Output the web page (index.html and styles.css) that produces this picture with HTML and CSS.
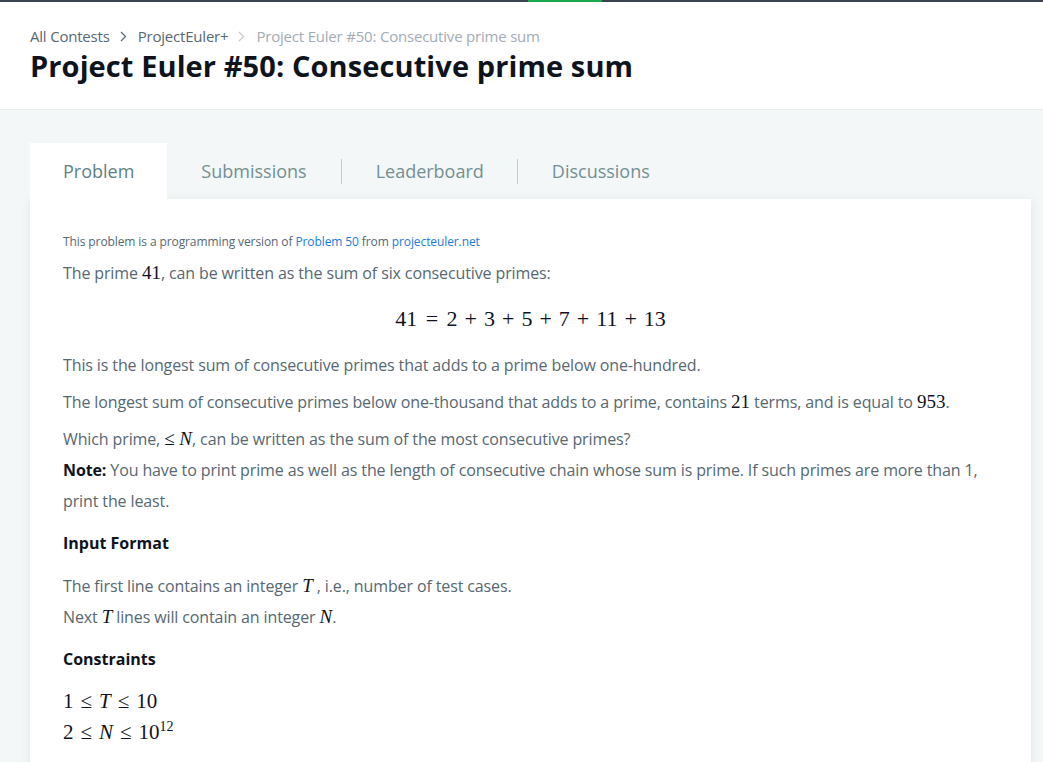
FILE: index.html
```html
<!DOCTYPE html>
<html>
<head>
<meta charset="utf-8">
<link rel="stylesheet" href="styles.css">
</head>
<body>
<div class="topbar"><div class="topbar-active"></div></div>
<header class="header">
  <nav class="crumbs">
    <a class="crumb">All Contests</a><svg class="sep" width="7" height="11" viewBox="0 0 7 11"><polyline points="1,1 5.5,5.5 1,10" fill="none" stroke="#576871" stroke-width="1.2"/></svg><a class="crumb">ProjectEuler+</a><svg class="sep" width="7" height="11" viewBox="0 0 7 11"><polyline points="1,1 5.5,5.5 1,10" fill="none" stroke="#c3c9d0" stroke-width="1.2"/></svg><span class="crumb current">Project Euler #50: Consecutive prime sum</span>
  </nav>
  <h1 class="title">Project Euler #50: Consecutive prime sum</h1>
</header>
<main class="main">
  <div class="tabs">
    <div class="tab active">Problem</div>
    <div class="tab">Submissions</div>
    <div class="tab-sep"></div>
    <div class="tab">Leaderboard</div>
    <div class="tab-sep"></div>
    <div class="tab">Discussions</div>
  </div>
  <section class="card">
    <p class="small">This problem is a programming version of <a class="link">Problem 50</a> from <a class="link">projecteuler.net</a></p>
    <p class="para first">The prime <span class="m">41</span>, can be written as the sum of six consecutive primes:</p>
    <div class="display"><span class="m">41<span class="rel">=</span>2<span class="bin">+</span>3<span class="bin">+</span>5<span class="bin">+</span>7<span class="bin">+</span>11<span class="bin">+</span>13</span></div>
    <p class="para">This is the longest sum of consecutive primes that adds to a prime below one-hundred.</p>
    <p class="para">The longest sum of consecutive primes below one-thousand that adds to a prime, contains <span class="m">21</span> terms, and is equal to <span class="m">953</span>.</p>
    <p class="para">Which prime, <span class="m">≤ <i>N</i></span>, can be written as the sum of the most consecutive primes?</p>
    <p class="para tight"><strong class="strong">Note:</strong> You have to print prime as well as the length of consecutive chain whose sum is prime. If such primes are more than 1, print the least.</p>
    <h3 class="subhead">Input Format</h3>
    <p class="para block">The first line contains an integer <span class="m"><i>T</i></span> , i.e., number of test cases.<br>Next <span class="m"><i>T</i></span> lines will contain an integer <span class="m"><i>N</i></span>.</p>
    <h3 class="subhead">Constraints</h3>
    <p class="para block mline"><span class="m">1<span class="rel">≤</span><i>T</i><span class="rel">≤</span>10</span><br><span class="m">2<span class="rel">≤</span><i>N</i><span class="rel">≤</span>10<sup class="sup">12</sup></span></p>
  </section>
</main>
</body>
</html>
```
FILE: styles.css
```css
html, body {
  margin: 0;
  padding: 0;
}
body {
  font-family: "Open Sans", "Noto Sans", sans-serif;
  background: #f3f7f7;
  color: #576871;
}
.topbar {
  height: 2px;
  background: #39424e;
  position: relative;
}
.topbar-active {
  position: absolute;
  left: 528px;
  top: 0;
  width: 74px;
  height: 2px;
  background: #1ba94c;
}
.header {
  background: #fff;
  border-bottom: 1px solid #e7ecec;
  padding: 24px 30px 0;
  height: 83px;
  box-sizing: content-box;
}
.crumbs {
  font-size: 15px;
  line-height: 20px;
  display: flex;
  align-items: center;
  letter-spacing: -0.2px;
}
.crumb {
  color: #576871;
}
.crumb.current {
  color: #a3acb6;
}
.sep {
  margin: 1px 11px 0 10px;
  display: block;
}
.title {
  margin: 0;
  font-size: 29px;
  line-height: 40px;
  font-weight: 700;
  color: #0e141e;
  letter-spacing: 0.1px;
}
.main {
  padding: 33px 12px 0 30px;
}
.tabs {
  display: flex;
  align-items: center;
  height: 56px;
}
.tab {
  font-size: 18px;
  color: #738f93;
  padding: 0 34px;
  height: 56px;
  line-height: 56px;
}
.tab-sep + .tab {
  padding: 0 33px 0 34px;
}
.tab.active {
  background: #fff;
  color: #5f7f85;
  padding: 0 33px;
}
.tab-sep {
  width: 1px;
  height: 25px;
  background: #c2cdd0;
}
.card {
  background: #fff;
  box-shadow: 0 2px 10px rgba(0, 0, 0, 0.08);
  padding: 34px 33px 30px;
  min-height: 600px;
}
.small {
  margin: 0;
  font-size: 12px;
  line-height: 18px;
  color: #576871;
  letter-spacing: -0.1px;
}
.link {
  color: #1c7cd6;
}
.para {
  margin: 6px 0 0;
  font-size: 16px;
  line-height: 31px;
  letter-spacing: -0.12px;
}
.para.first {
  margin-top: 7px;
}
.para.tight {
  margin-top: 0;
}
.para.block {
  margin-top: 16px;
}
.para.mline {
  margin-top: 16px;
}
.m {
  font-family: "Liberation Serif", "DejaVu Serif", serif;
  font-size: 19px;
  line-height: 1;
  color: #0e141e;
  letter-spacing: 0;
}
.m i {
  font-style: italic;
}
.display {
  text-align: center;
  margin: 15px 0 14px;
  height: 32px;
  line-height: 32px;
}
.display .m {
  font-size: 22px;
}
.display .rel {
  padding: 0 8.5px;
}
.bin {
  padding: 0 7px;
}
.rel {
  padding: 0 6px;
}
.strong {
  color: #0e141e;
  font-weight: 700;
}
.subhead {
  margin: 14px 0 0;
  font-size: 16px;
  line-height: 24px;
  color: #0e141e;
  font-weight: 700;
}
.mline .m {
  font-size: 21px;
}
.mline .rel {
  padding: 0 7px;
}
.sup {
  font-size: 14px;
  vertical-align: 8px;
  line-height: 0;
}
```
